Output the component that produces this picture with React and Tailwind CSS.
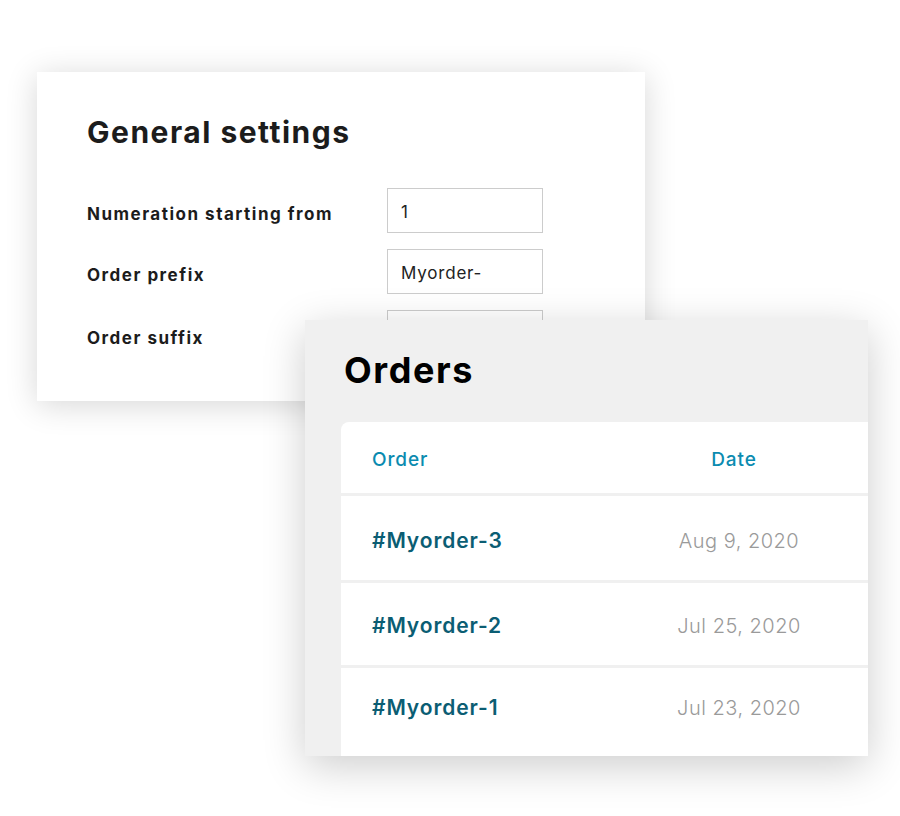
const settings = [
  { label: 'Numeration starting from', value: '1' },
  { label: 'Order prefix', value: 'Myorder-' },
  { label: 'Order suffix', value: '' },
];

const orders = [
  { id: '#Myorder-3', date: 'Aug 9, 2020', row: 'h-[84px] pt-[6px]' },
  { id: '#Myorder-2', date: 'Jul 25, 2020', row: 'h-[82px] pt-[3px]' },
  { id: '#Myorder-1', date: 'Jul 23, 2020', row: 'flex-1 items-start pt-[26px]' },
];

export default function App() {
  return (
    <div className="relative w-[900px] h-[816px] bg-white overflow-hidden font-['Inter','Open_Sans',sans-serif]">
      {/* General settings card */}
      <div className="absolute left-[37px] top-[72px] w-[608px] h-[329px] bg-white shadow-[0_4px_30px_rgba(0,0,0,0.16)] pl-[50px] pt-[38px]">
        <h2 className="text-[30px] leading-[44px] font-bold text-[#1c1c1c] tracking-[1.5px]">General settings</h2>
        <div className="mt-[34px] flex flex-col gap-[16px]">
          {settings.map((s, i) => (
            <div key={s.label} className="flex items-center">
              <span className={`w-[300px] text-[17px] font-bold text-[#1c1c1c] tracking-[1.5px] ${i === 2 ? 'pt-[12px]' : 'pt-[8px]'}`}>{s.label}</span>
              <div className="w-[156px] h-[45px] border border-[#cccccc] flex items-center pt-[4px] px-[13px] text-[17px] text-[#222] tracking-[0.8px]">
                {s.value}
              </div>
            </div>
          ))}
        </div>
      </div>

      {/* Orders card */}
      <div className="absolute left-[305px] top-[320px] w-[563px] h-[436px] bg-[#f0f0f0] shadow-[0_10px_40px_rgba(0,0,0,0.2)] flex flex-col">
        <h2 className="pl-[39px] pt-[28px] text-[36px] leading-[44px] font-bold text-black tracking-[1.6px]">Orders</h2>
        <div className="ml-[36px] mt-[30px] flex-1 flex flex-col gap-[3px] bg-[#f0f0f0] rounded-tl-lg overflow-hidden">
          <div className="h-[71px] pt-[6px] bg-white flex items-center pl-[31px] text-[19px] font-medium text-[#0b8bb0] tracking-[0.9px]">
            <span className="w-[248px]">Order</span>
            <span className="w-[228px] text-center">Date</span>
          </div>
          {orders.map((o) => (
            <div key={o.id} className={`bg-white flex items-center pl-[31px] ${o.row}`}>
              <span className="w-[248px] text-[21px] leading-[28px] font-semibold text-[#0b5d73] tracking-[0.9px]">{o.id}</span>
              <span className="w-[238px] text-center text-[20px] leading-[28px] font-light text-[#9a9a9a] tracking-[0.5px]">{o.date}</span>
            </div>
          ))}
        </div>
      </div>
    </div>
  );
}
